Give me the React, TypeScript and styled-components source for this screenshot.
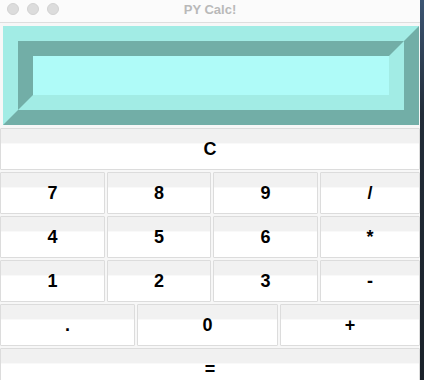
import React from 'react';
import styled, { createGlobalStyle } from 'styled-components';

const GlobalStyle = createGlobalStyle`
  html, body {
    margin: 0;
    padding: 0;
    width: 424px;
    height: 380px;
    overflow: hidden;
    background: #1d2733;
  }
  * {
    box-sizing: border-box;
  }
`;

const rows: string[][] = [
  ['7', '8', '9', '/'],
  ['4', '5', '6', '*'],
  ['1', '2', '3', '-'],
];

export default function App() {
  return (
    <Screen>
      <GlobalStyle />
      <Window>
        <TitleBar>
          <Lights>
            <Light />
            <Light />
            <Light />
          </Lights>
          <Title>PY Calc!</Title>
        </TitleBar>
        <Body>
          <Display>
            <DisplayInner>
              <Entry />
            </DisplayInner>
          </Display>
          <Keys>
            <KeyRow $cols="1fr">
              <Key>C</Key>
            </KeyRow>
            {rows.map((row, i) => (
              <KeyRow key={i} $cols="105px 104px 105px 1fr">
                {row.map((k) => (
                  <Key key={k}>{k}</Key>
                ))}
              </KeyRow>
            ))}
            <KeyRow $cols="135px 141px 1fr">
              <Key>.</Key>
              <Key>0</Key>
              <Key>+</Key>
            </KeyRow>
            <KeyRow $cols="1fr">
              <Key>=</Key>
            </KeyRow>
          </Keys>
        </Body>
      </Window>
      <Desktop />
    </Screen>
  );
}

const Screen = styled.div`
  display: flex;
  width: 424px;
  height: 380px;
  overflow: hidden;
`;

const Window = styled.div`
  width: 420px;
  flex-shrink: 0;
  display: flex;
  flex-direction: column;
  background: #f7f7f7;
`;

const Desktop = styled.div`
  flex: 1;
  background: linear-gradient(to bottom, #3c5573 0, #222c38 30%, #1a2129 100%);
`;

const TitleBar = styled.div`
  position: relative;
  height: 23px;
  flex-shrink: 0;
  display: flex;
  align-items: center;
  justify-content: center;
  background: #fbfbfb;
  border-bottom: 1px solid #dedede;
`;

const Lights = styled.div`
  position: absolute;
  left: 7px;
  top: 3px;
  display: flex;
  gap: 8px;
`;

const Light = styled.span`
  width: 12px;
  height: 12px;
  border-radius: 50%;
  background: #dcdcdc;
  border: 1px solid #d2d2d2;
`;

const Title = styled.div`
  margin-top: -4px;
  font-family: 'Liberation Sans', Arial, sans-serif;
  font-weight: bold;
  font-size: 13px;
  color: #b9b9b9;
`;

const Body = styled.div`
  display: flex;
  flex-direction: column;
  padding: 3px 1px 0 3px;
`;

const Display = styled.div`
  height: 99px;
  border-style: solid;
  border-width: 15px;
  border-color: #a2ece5 #72aea7 #72aea7 #a2ece5;
`;

const DisplayInner = styled.div`
  height: 100%;
  border-style: solid;
  border-width: 15px;
  border-color: #72aea7 #a2ece5 #a2ece5 #72aea7;
`;

const Entry = styled.div`
  height: 100%;
  background: #affbf8;
`;

const Keys = styled.div`
  display: flex;
  flex-direction: column;
  gap: 2px;
  margin: 3px -1px 0 -3px;
`;

const KeyRow = styled.div<{ $cols: string }>`
  display: grid;
  grid-template-columns: ${(p) => p.$cols};
  gap: 2px;
`;

const Key = styled.button`
  height: 42px;
  border: 1px solid #dcdcdc;
  border-radius: 1px;
  background: linear-gradient(to bottom, #f1f1f1 0, #f1f1f1 34%, #ffffff 38%, #ffffff 100%);
  font-family: 'Liberation Sans', Arial, sans-serif;
  font-weight: bold;
  font-size: 18px;
  color: #000;
  padding: 0;
  display: flex;
  align-items: center;
  justify-content: center;
`;
